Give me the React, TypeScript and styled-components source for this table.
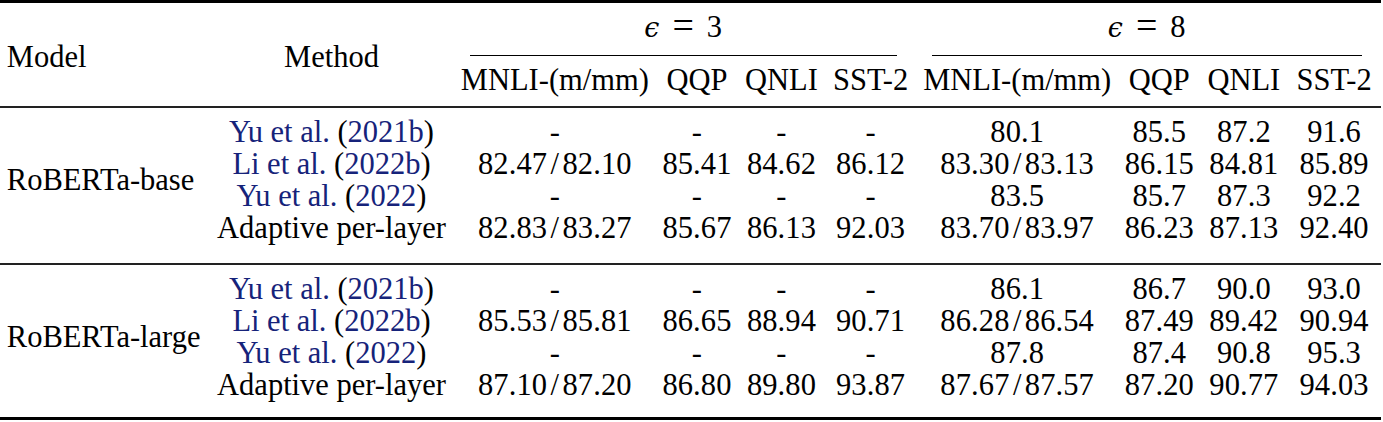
import React from "react"
import styled, { createGlobalStyle } from "styled-components"

const GlobalStyle = createGlobalStyle`
  html, body {
    margin: 0;
    padding: 0;
    background: #fff;
  }
  body {
    font-family: "Liberation Serif", "DejaVu Serif", serif;
    color: #000;
  }
`

interface Method {
  name?: string
  cite?: { authors: string; year: string }
  values: string[]
}

interface Group {
  model: string
  methods: Method[]
}

const yu2021 = { authors: "Yu et al.", year: "2021b" }
const li2022 = { authors: "Li et al.", year: "2022b" }
const yu2022 = { authors: "Yu et al.", year: "2022" }
const none = ["-", "-", "-", "-"]

const groups: Group[] = [
  {
    model: "RoBERTa-base",
    methods: [
      { cite: yu2021, values: [...none, "80.1", "85.5", "87.2", "91.6"] },
      {
        cite: li2022,
        values: ["82.47/82.10", "85.41", "84.62", "86.12", "83.30/83.13", "86.15", "84.81", "85.89"],
      },
      { cite: yu2022, values: [...none, "83.5", "85.7", "87.3", "92.2"] },
      {
        name: "Adaptive per-layer",
        values: ["82.83/83.27", "85.67", "86.13", "92.03", "83.70/83.97", "86.23", "87.13", "92.40"],
      },
    ],
  },
  {
    model: "RoBERTa-large",
    methods: [
      { cite: yu2021, values: [...none, "86.1", "86.7", "90.0", "93.0"] },
      {
        cite: li2022,
        values: ["85.53/85.81", "86.65", "88.94", "90.71", "86.28/86.54", "87.49", "89.42", "90.94"],
      },
      { cite: yu2022, values: [...none, "87.8", "87.4", "90.8", "95.3"] },
      {
        name: "Adaptive per-layer",
        values: ["87.10/87.20", "86.80", "89.80", "93.87", "87.67/87.57", "87.20", "90.77", "94.03"],
      },
    ],
  },
]

const tasks = ["MNLI-(m/mm)", "QQP", "QNLI", "SST-2"]
const epsilons = ["3", "8"]

export default function App() {
  return (
    <>
      <GlobalStyle />
      <Table>
        <HeadLabel $align="left">Model</HeadLabel>
        <HeadLabel>Method</HeadLabel>
        {epsilons.map((eps) => (
          <EpsHead key={eps}>
            <EpsText>
              <Epsilon>ϵ</Epsilon>
              <Equals>=</Equals>
              {eps}
            </EpsText>
            <CMidRule />
          </EpsHead>
        ))}
        {epsilons.map((eps) =>
          tasks.map((task) => <SubHead key={eps + task}>{task}</SubHead>)
        )}
        <Rule $top={0} />

        {groups.map((group, gi) => (
          <React.Fragment key={group.model}>
            {gi > 0 && <Rule $top={19} />}
            <ModelCell>{group.model}</ModelCell>
            {group.methods.map((m, mi) => (
              <React.Fragment key={mi}>
                <MethodCell>
                  {m.cite ? (
                    <>
                      <Cite>{m.cite.authors}</Cite> (<Cite>{m.cite.year}</Cite>)
                    </>
                  ) : (
                    m.name
                  )}
                </MethodCell>
                {m.values.map((v, vi) => (
                  <Value key={vi}>{renderValue(v)}</Value>
                ))}
              </React.Fragment>
            ))}
          </React.Fragment>
        ))}
      </Table>
    </>
  )
}

function renderValue(v: string) {
  const parts = v.split("/")
  if (parts.length === 1) return v
  return (
    <>
      {parts[0]}
      <Slash>/</Slash>
      {parts[1]}
    </>
  )
}

const Table = styled.div`
  display: grid;
  grid-template-columns: 209px 245px 201.6px 82.6px 86.6px 91.6px 201.6px 82.6px 86.6px 1fr;
  width: 1381px;
  border-top: 3px solid #000;
  border-bottom: 3px solid #000;
  padding-bottom: 16px;
  font-family: "Liberation Serif", "DejaVu Serif", serif;
  font-size: 30.5px;
  line-height: 32px;
  color: #000;
`

const BaseCell = styled.div<{ $align?: "left" | "center" }>`
  padding: 0 6.8px;
  white-space: nowrap;
  text-align: ${(p) => p.$align ?? "center"};
`

const HeadLabel = styled(BaseCell)`
  grid-row: span 2;
  align-self: center;
  padding-top: 4px;
`

const EpsHead = styled.div`
  grid-column: span 4;
  padding-top: 8px;
  display: flex;
  flex-direction: column;
`

const EpsText = styled.div`
  text-align: center;
  padding-bottom: 11px;
  padding-right: 4px;
`

const Epsilon = styled.span`
  font-family: "DejaVu Serif", "Liberation Serif", serif;
  font-style: italic;
  font-size: 27px;
`

const Equals = styled.span`
  display: inline-block;
  margin: 0 13px;
  font-size: 38px;
  line-height: 32px;
  vertical-align: top;
  transform: translateY(-2px);
`

const CMidRule = styled.div`
  height: 1px;
  background: #000;
  margin: 0 19px 0 15.5px;
`

const SubHead = styled(BaseCell)`
  padding-top: 8px;
  padding-bottom: 10px;
`

const Rule = styled.div<{ $top: number }>`
  grid-column: 1 / -1;
  height: 2px;
  background: #222;
  margin-top: ${(p) => p.$top}px;
  margin-bottom: 8px;
`

const ModelCell = styled(BaseCell)`
  grid-row: span 4;
  align-self: center;
  text-align: left;
`

const MethodCell = styled(BaseCell)``

const Cite = styled.span`
  color: #16237a;
`

const Value = styled(BaseCell)`
  letter-spacing: 0.1px;
`

const Slash = styled.span`
  margin: 0 3.4px;
`
